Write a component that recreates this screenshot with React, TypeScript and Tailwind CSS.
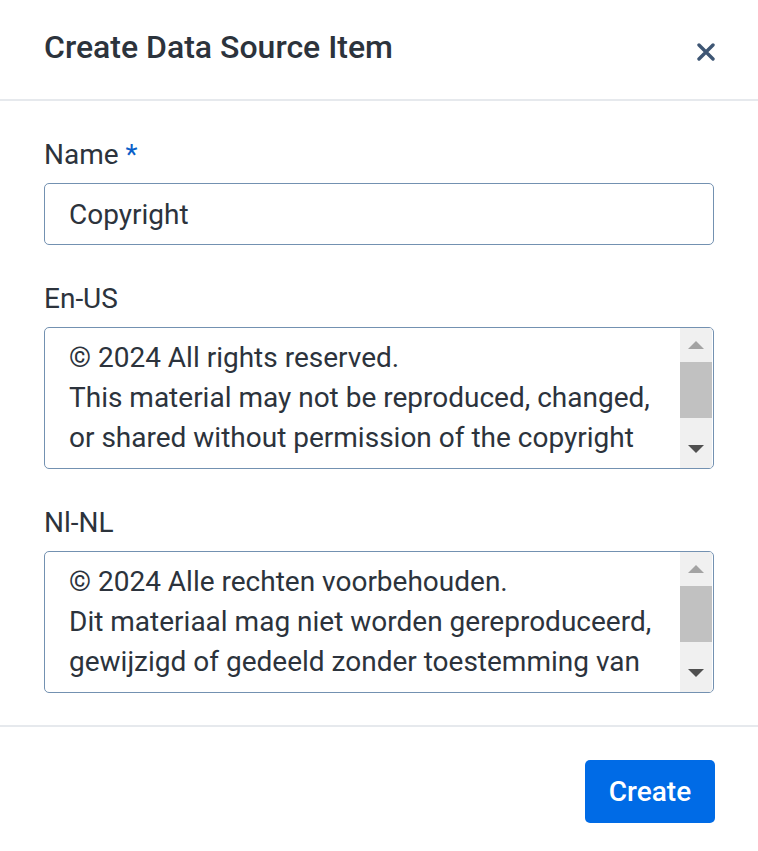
import React from 'react';

const enText =
  '© 2024 All rights reserved.\nThis material may not be reproduced, changed, or shared without permission of the copyright holder.';
const nlText =
  '© 2024 Alle rechten voorbehouden.\nDit materiaal mag niet worden gereproduceerd, gewijzigd of gedeeld zonder toestemming van de auteursrechthebbende.';

const Scrollbar: React.FC = () => (
  <div className="w-[32px] mr-[1.5px] bg-[#f0f0f0] flex flex-col shrink-0">
    <div className="h-[34px] flex items-center justify-center">
      <svg width="16" height="8" viewBox="0 0 16 8">
        <polygon points="8,0 16,8 0,8" fill="#a3a3a3" />
      </svg>
    </div>
    <div className="h-[56px] bg-[#c1c1c1]" />
    <div className="flex-1" />
    <div className="h-[38px] flex items-center justify-center">
      <svg width="16" height="8" viewBox="0 0 16 8">
        <polygon points="0,0 16,0 8,8" fill="#505050" />
      </svg>
    </div>
  </div>
);

const TextBox: React.FC<{ value: string }> = ({ value }) => (
  <div className="h-[142px] flex border-[1.5px] border-[#7391b1] rounded-[5px] bg-white overflow-hidden">
    <textarea
      className="flex-1 min-w-0 h-[120px] mt-[10px] pl-[24px] pr-[8px] py-0 text-[28px] leading-[40px] text-[#2c333c] bg-transparent outline-none resize-none overflow-hidden"
      defaultValue={value}
    />
    <Scrollbar />
  </div>
);

export default function App() {
  return (
    <div className="w-[758px] h-[851px] bg-white flex flex-col font-['Roboto',sans-serif] text-[#2c333c]">
      <div className="h-[101px] flex items-center justify-between pl-[44px] pr-[43px] border-b-[2px] border-[#e6e9ed] shrink-0">
        <h2 className="text-[32px] font-medium leading-none -mt-[5px]">Create Data Source Item</h2>
        <button className="text-[#3e5674] mt-[4px]">
          <svg width="18" height="18" viewBox="0 0 18 18" fill="none">
            <path d="M2 2L16 16M16 2L2 16" stroke="currentColor" strokeWidth="3.4" strokeLinecap="round" />
          </svg>
        </button>
      </div>

      <div className="flex flex-col px-[44px] pt-[36px] pb-[32px] gap-[36px] flex-1">
        <div className="flex flex-col gap-[10px]">
          <label className="text-[28px] leading-[36px]">
            Name <span className="text-[#0a5fc9]">*</span>
          </label>
          <input
            className="w-full h-[62px] border-[1.5px] border-[#7391b1] rounded-[5px] bg-white px-[24px] text-[28px] text-[#2c333c] outline-none"
            defaultValue="Copyright"
          />
        </div>
        <div className="flex flex-col gap-[10px]">
          <label className="text-[28px] leading-[36px]">En-US</label>
          <TextBox value={enText} />
        </div>
        <div className="flex flex-col gap-[10px]">
          <label className="text-[28px] leading-[36px]">Nl-NL</label>
          <TextBox value={nlText} />
        </div>
      </div>

      <div className="border-t-[2px] border-[#e6e9ed] flex justify-end items-start pr-[43px] pt-[33px] h-[126px] shrink-0">
        <button className="w-[130px] h-[63px] rounded-[5px] bg-[#006be6] text-white text-[28px] font-medium">
          Create
        </button>
      </div>
    </div>
  );
}
